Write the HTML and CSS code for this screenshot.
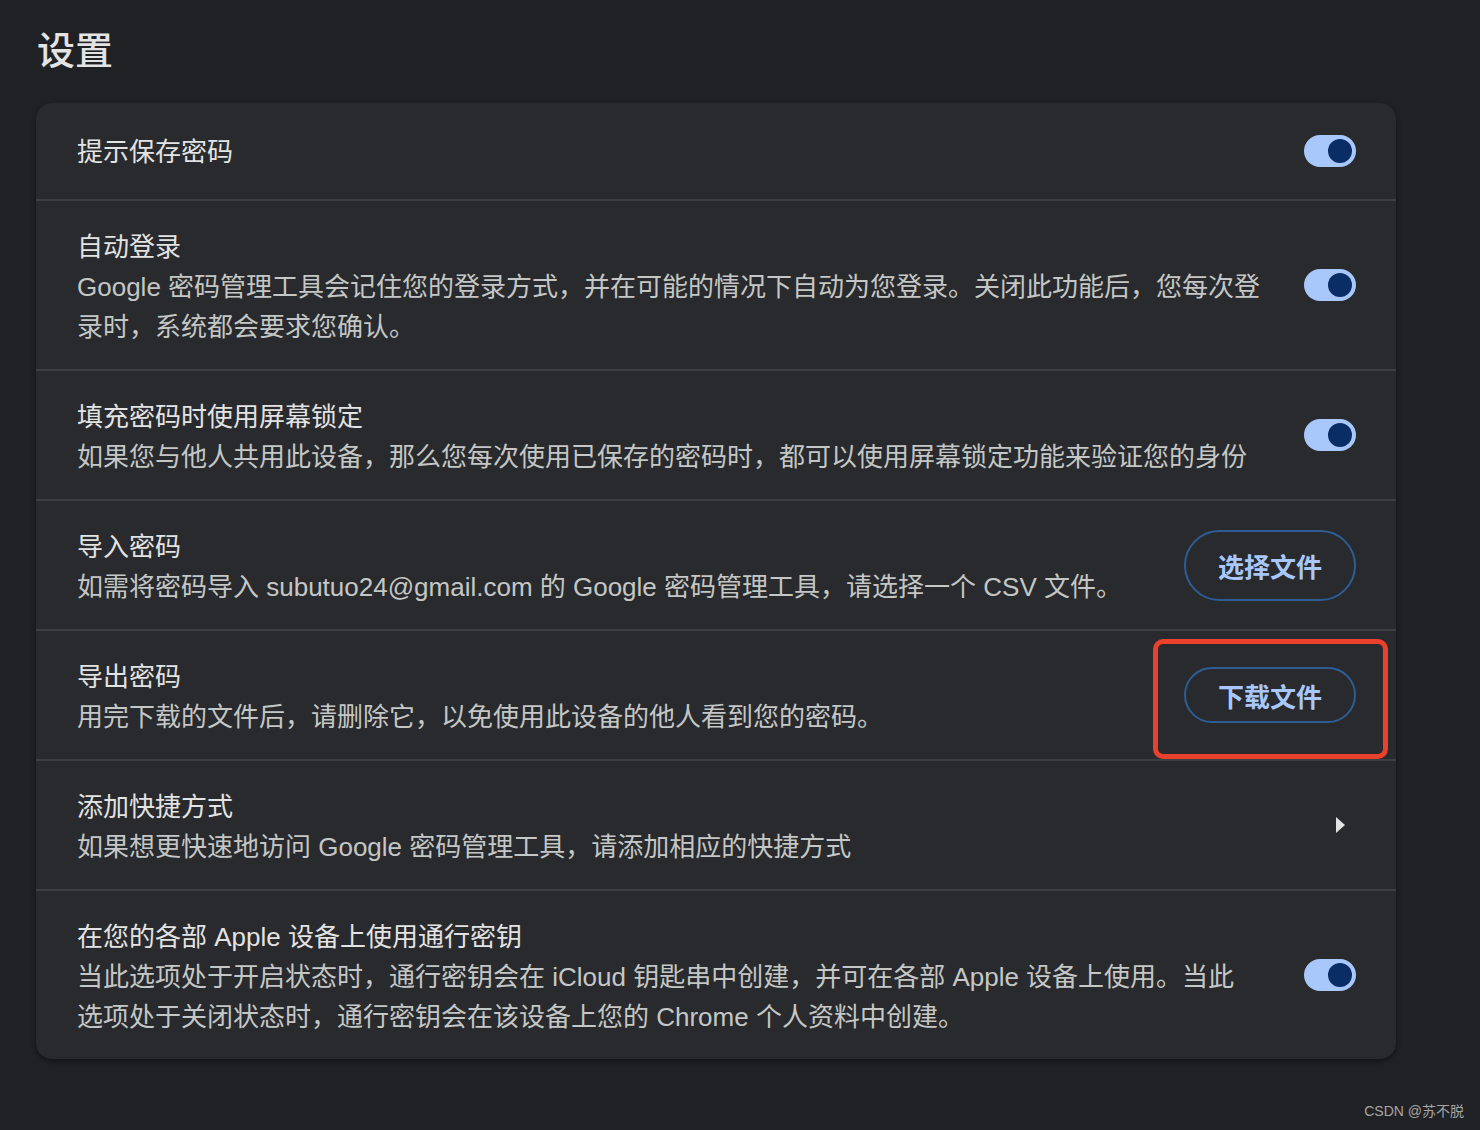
FILE: index.html
```html
<!DOCTYPE html>
<html lang="zh-CN">
<head>
<meta charset="utf-8">
<title>设置</title>
<link rel="stylesheet" href="styles.css">
</head>
<body>
<main class="page">
  <h1 class="page-title">设置</h1>
  <section class="card">
    <div class="row row-single">
      <div class="row-text">
        <div class="row-title">提示保存密码</div>
      </div>
      <div class="toggle"><span class="knob"></span></div>
    </div>
    <div class="row">
      <div class="row-text">
        <div class="row-title">自动登录</div>
        <div class="row-desc">Google 密码管理工具会记住您的登录方式，并在可能的情况下自动为您登录。关闭此功能后，您每次登<br>录时，系统都会要求您确认。</div>
      </div>
      <div class="toggle"><span class="knob"></span></div>
    </div>
    <div class="row">
      <div class="row-text">
        <div class="row-title">填充密码时使用屏幕锁定</div>
        <div class="row-desc">如果您与他人共用此设备，那么您每次使用已保存的密码时，都可以使用屏幕锁定功能来验证您的身份</div>
      </div>
      <div class="toggle"><span class="knob"></span></div>
    </div>
    <div class="row">
      <div class="row-text">
        <div class="row-title">导入密码</div>
        <div class="row-desc">如需将密码导入 subutuo24@gmail.com 的 Google 密码管理工具，请选择一个 CSV 文件。</div>
      </div>
      <button class="btn btn-tall">选择文件</button>
    </div>
    <div class="row row-marked">
      <div class="row-text">
        <div class="row-title">导出密码</div>
        <div class="row-desc">用完下载的文件后，请删除它，以免使用此设备的他人看到您的密码。</div>
      </div>
      <button class="btn">下载文件</button>
      <div class="highlight"></div>
    </div>
    <div class="row">
      <div class="row-text">
        <div class="row-title">添加快捷方式</div>
        <div class="row-desc">如果想更快速地访问 Google 密码管理工具，请添加相应的快捷方式</div>
      </div>
      <svg class="chevron" width="12" height="18" viewBox="0 0 12 18"><polygon points="1,1 10,9 1,17" fill="#e3e3e3"/></svg>
    </div>
    <div class="row">
      <div class="row-text">
        <div class="row-title">在您的各部 Apple 设备上使用通行密钥</div>
        <div class="row-desc">当此选项处于开启状态时，通行密钥会在 iCloud 钥匙串中创建，并可在各部 Apple 设备上使用。当此<br>选项处于关闭状态时，通行密钥会在该设备上您的 Chrome 个人资料中创建。</div>
      </div>
      <div class="toggle"><span class="knob"></span></div>
    </div>
  </section>
  <div class="watermark">CSDN @苏不脱</div>
</main>
</body>
</html>
```
FILE: styles.css
```css
html, body {
  margin: 0;
  padding: 0;
  background: #202124;
}
body {
  font-family: "Liberation Sans", "Noto Sans CJK SC", sans-serif;
  color: #e3e3e3;
  width: 1480px;
  height: 1130px;
  overflow: hidden;
}
.page {
  position: relative;
  padding: 25px 84px 0 36px;
  height: 1105px;
}
.page-title {
  margin: 0 0 26px 1px;
  font-size: 38px;
  line-height: 52px;
  font-weight: 500;
  color: #e3e3e3;
}
.card {
  width: 1360px;
  background: #292a2d;
  border-radius: 16px;
  box-shadow: 0 2px 5px rgba(0, 0, 0, 0.45);
}
.row {
  position: relative;
  display: flex;
  align-items: center;
  padding: 26px 40px 22px 41px;
  border-top: 2px solid #3d3e41;
}
.row:first-child {
  border-top: none;
}
.row-single {
  padding-top: 29px;
  padding-bottom: 27px;
}
.row-text {
  flex: 1 1 auto;
  min-width: 0;
  max-width: 1200px;
  font-size: 26px;
  line-height: 40px;
}
.row-title {
  color: #e3e3e3;
}
.row-desc {
  color: #c4c7c5;
}
.toggle {
  margin-left: auto;
  margin-bottom: 4px;
  width: 52px;
  height: 32px;
  border-radius: 16px;
  background: #a8c7fa;
  display: flex;
  align-items: center;
  justify-content: flex-end;
  padding-right: 4px;
  box-sizing: border-box;
  flex: none;
}
.row-single .toggle {
  margin-bottom: 2px;
}
.knob {
  width: 24px;
  height: 24px;
  border-radius: 50%;
  background: #0b2d66;
}
.btn {
  margin-left: auto;
  margin-bottom: 4px;
  flex: none;
  width: 172px;
  height: 56px;
  border-radius: 36px;
  border: 2px solid #2d5d94;
  background: transparent;
  color: #a8c7fa;
  font-family: "Liberation Sans", "Noto Sans CJK SC", sans-serif;
  font-size: 26px;
  font-weight: 700;
  padding: 0;
}
.btn-tall {
  height: 71px;
}
.chevron {
  margin-left: auto;
  margin-right: 9px;
  margin-bottom: 4px;
  flex: none;
}
.highlight {
  position: absolute;
  left: 1117px;
  top: 8px;
  width: 235px;
  height: 120px;
  box-sizing: border-box;
  border: 5px solid #e9412b;
  border-radius: 10px;
  pointer-events: none;
}
.watermark {
  position: absolute;
  right: 16px;
  bottom: 10px;
  font-size: 14px;
  line-height: 18px;
  color: #a6a6a6;
}
```
